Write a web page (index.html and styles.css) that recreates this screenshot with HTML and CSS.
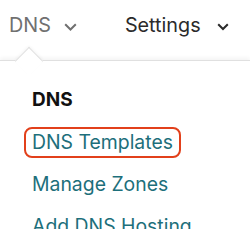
FILE: index.html
```html
<!DOCTYPE html>
<html>
<head>
<meta charset="utf-8">
<link rel="stylesheet" href="styles.css">
</head>
<body>
<nav class="topnav">
  <div class="navitem navitem-dns">
    <span>DNS</span>
    <svg class="chev" width="13" height="8" viewBox="0 0 13 8"><path d="M1.2 1.2 L6.5 6.5 L11.8 1.2" fill="none" stroke="currentColor" stroke-width="2"/></svg>
  </div>
  <div class="navitem navitem-settings">
    <span>Settings</span>
    <svg class="chev" width="12" height="8" viewBox="0 0 12 8"><path d="M1.2 1.2 L6 6 L10.8 1.2" fill="none" stroke="currentColor" stroke-width="2"/></svg>
  </div>
</nav>
<div class="panel">
  <div class="caret"></div>
  <div class="menu">
    <div class="heading">DNS</div>
    <a class="item highlighted">DNS Templates</a>
    <a class="item">Manage Zones</a>
    <a class="item">Add DNS Hosting</a>
  </div>
</div>
</body>
</html>
```
FILE: styles.css
```css
html, body {
  margin: 0;
  padding: 0;
  background: #fff;
  font-family: Inter, "Noto Sans", sans-serif;
  overflow: hidden;
  height: 229px;
}
.topnav {
  display: flex;
  align-items: flex-start;
  height: 60px;
  box-sizing: border-box;
  padding: 13px 0 0 9px;
}
.navitem {
  display: flex;
  align-items: center;
  font-size: 19.8px;
  line-height: 24px;
  height: 24px;
}
.navitem-dns { color: #707070; }
.navitem-settings { color: #2b2b2b; margin-left: 48px; }
.chev { margin-left: 13px; margin-top: 3px; }
.navitem-settings .chev { margin-left: 16px; }
.panel {
  position: relative;
  border-top: 1px solid #e0e0e0;
  box-shadow: 0 -2px 4px rgba(0,0,0,0.05);
  padding-top: 27px;
}
.caret {
  position: absolute;
  left: 19px;
  top: -10.5px;
  width: 19px;
  height: 19px;
  background: #fff;
  border-left: 1px solid #e0e0e0;
  border-top: 1px solid #e0e0e0;
  transform: rotate(45deg);
  box-shadow: -1px -1px 3px rgba(0,0,0,0.04);
}
.menu {
  display: flex;
  flex-direction: column;
  padding-left: 24px;
}
.heading {
  font-weight: 700;
  font-size: 19px;
  line-height: 24px;
  color: #111;
  padding-left: 8px;
  margin-bottom: 15px;
}
.item {
  font-size: 19.4px;
  line-height: 27px;
  color: #1d6f7b;
  padding: 0 6px;
  height: 31px;
  box-sizing: border-box;
  align-self: flex-start;
  margin-bottom: 11px;
  border: 2px solid transparent;
  border-radius: 8px;
  white-space: nowrap;
}
.item.highlighted {
  border-color: #e2401b;
}
```
